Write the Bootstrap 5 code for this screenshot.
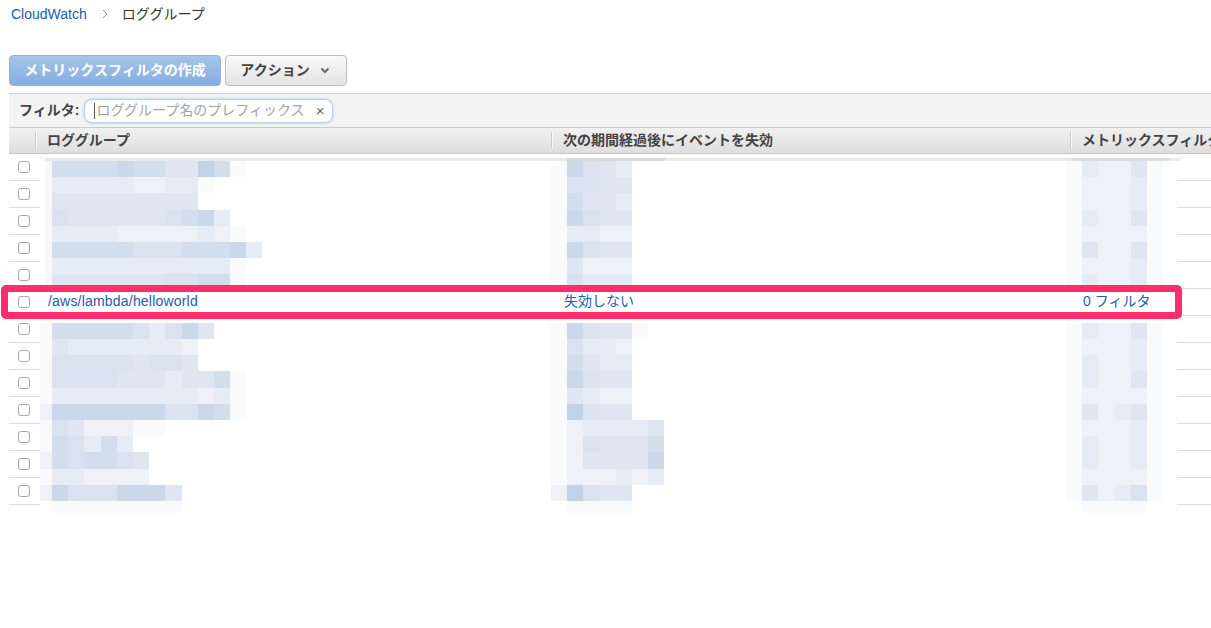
<!DOCTYPE html>
<html lang="ja">
<head>
<meta charset="utf-8">
<title>ロググループ</title>
<link href="https://cdn.jsdelivr.net/npm/bootstrap@5.3.0/dist/css/bootstrap.min.css" rel="stylesheet">
<style>
html,body{height:100%;overflow:hidden;background:#fff}
body{font-family:"Liberation Sans","Noto Sans CJK JP",sans-serif;font-size:14px;color:#444;position:relative}
a{color:#1a5cb0;text-decoration:none}
.crumbs{height:28px;padding-left:11px;color:#333}
.crumb-sep{margin:0 13px 0 14px;width:8px}
.page-main{padding-left:9px;margin-top:27px}
.act-bar{gap:4px;height:31px;margin-bottom:7px}
.btn.btn-make,.btn.btn-act{font-size:14px;font-weight:700;height:31px;border-radius:4px;padding:0;display:flex;align-items:center;justify-content:center}
.btn.btn-make,.btn.btn-make:disabled{width:212px;color:#fff;opacity:1;background:linear-gradient(#a6c5e9,#85ade0);border:1px solid #8fb2dd}
.btn.btn-act{width:122px;color:#444;gap:10px;padding-right:2px;background:linear-gradient(#f9f9f9,#e3e3e3);border:1px solid #bcbcbc}
.filter-bar{height:35px;background:#f3f3f3;border-top:1px solid #ccc;border-bottom:1px solid #ccc;padding-left:10px;gap:4px}
.filter-label{font-weight:700;font-size:14px;color:#444}
.filter-box{width:249px;height:24px;background:#fff;border:1px solid #b9d0ec;border-radius:8px;box-shadow:0 0 3px #a9c8ee;padding:0 8px 0 9px;font-size:14px;color:#a3a3a3;margin-left:1px}
.caret-bar{width:1px;height:16px;background:#555;margin-right:1px}
.filter-clear{font-size:15px;color:#666;line-height:1}
.log-wrap{width:1300px}
.table.log-table{table-layout:fixed;width:1300px;margin:0;font-size:14px;--bs-table-bg:transparent}
.log-table th{height:25px;padding:0 0 0 11px;font-size:14px;font-weight:700;color:#444;background:linear-gradient(#f1f1f1,#dedede);border-bottom:1px solid #c4c4c4;vertical-align:middle;position:relative}
.log-table th+th:before{content:"";position:absolute;left:-1px;top:4px;bottom:4px;width:2px;background:#fafafa;border-left:1px solid #ccc}
.log-table td{height:27px;padding:0 0 0 12px;border-bottom:1px solid #ddd;vertical-align:middle;color:#1a5cb0}
.log-table td:first-child{padding:0 0 0 9px}
.log-table .form-check-input{width:12px;height:12px;margin:0;display:block;border:1px solid #a8a8a8;border-radius:3px}
.path-link{letter-spacing:.2px}
.row-marked{position:relative;z-index:2;background:#fff}
.blur-cover{position:absolute;z-index:1;left:40px;top:158px;width:1137px;height:353px;background:#fefefe}
.blur-band{position:absolute;left:5px;right:-3px;top:0;height:3px;background:linear-gradient(90deg,#e9e9e9 0 522px,#d9d9d9 522px 620px,#ebebeb 620px 1026px,#dedede 1026px 1125px,#ebebeb 1125px)}
.blur-rows{position:absolute;left:0;right:0;top:3px}
.blur-row{display:grid;grid-template-columns:511px 515px 1fr;height:16.2px}
.blur-row:last-child{height:12px}
.blur-seg{display:flex}
.blur-seg i{display:block;width:16.2px;height:100%}
.blur-seg:first-child i:first-child{width:12px}
.blur-row:nth-child(-n+8) .blur-seg:first-child i:first-child{background:linear-gradient(90deg,#fefefe 5px,#f6f8fb 5px)}
.s0{background:#fefefe}.s1{background:#f8fafc}.s2{background:#eef2f8}.s3{background:#e6ecf5}.s4{background:#dfe6f1}.s5{background:#d9e2ee}.s6{background:#d2deec}.s7{background:#cbd8e9}.s8{background:#c2d2e6}
.mark-box{position:absolute;z-index:3;left:1px;top:285px;width:1181px;height:34px;border:7px solid #ff2d6c;border-radius:5px}
</style>
</head>
<body>
<nav class="crumbs d-flex align-items-center"><a href="#">CloudWatch</a><svg class="crumb-sep" width="8" height="10" viewBox="0 0 8 10"><path d="M2 1l4 4-4 4" fill="none" stroke="#999" stroke-width="1"/></svg><span>ロググループ</span></nav>
<main class="page-main">
  <div class="act-bar d-flex">
    <button class="btn btn-make" disabled>メトリックスフィルタの作成</button>
    <button class="btn btn-act">アクション<svg width="10" height="7" viewBox="0 0 10 7"><path d="M1.5 1.5L5 5l3.5-3.5" fill="none" stroke="#666" stroke-width="2"/></svg></button>
  </div>
  <div class="log-wrap">
    <div class="filter-bar d-flex align-items-center">
      <span class="filter-label">フィルタ:</span>
      <div class="filter-box d-flex align-items-center"><span class="caret-bar"></span><span class="flex-grow-1">ロググループ名のプレフィックス</span><span class="filter-clear">×</span></div>
    </div>
    <table class="table log-table">
      <colgroup><col style="width:27px"><col style="width:516px"><col style="width:519px"><col></colgroup>
      <thead><tr><th></th><th>ロググループ</th><th>次の期間経過後にイベントを失効</th><th>メトリックスフィルタ</th></tr></thead>
      <tbody id="logRows"></tbody>
    </table>
  </div>
</main>
<div class="blur-cover"><div class="blur-band"></div><div class="blur-rows" id="blurRows"></div></div>
<div class="mark-box"></div>
<script>
var box='<td><input class="form-check-input" type="checkbox"></td>';
var h='';
for(var i=0;i<13;i++){
  h+=(i==5?'<tr class="row-marked">'+box+'<td><a class="path-link" href="#">/aws/lambda/helloworld</a></td><td><a href="#">失効しない</a></td><td><a href="#">0 フィルタ</a></td>':'<tr>'+box+'<td></td><td></td><td></td>')+'</tr>';
}
document.getElementById('logRows').innerHTML=h;
var data=[
['1666676644861','17543','132241'],
['133333223310','15544','122231'],
['1444444444','16443','122231'],
['154444445673','17544','132241'],
['1333322222321','13322','122221'],
['16666655566673','17544','142241'],
['0333333333331','14222','122231'],
['0444444455661','15333','132231'],
['','',''],
['','',''],
['16666653574','175441','132241'],
['1433333332','15332','122231'],
['15555545540','16433','132231'],
['1555544434461','17544','132241'],
['1333333333231','14322','122221'],
['2777777755761','18544','142341'],
['1542221100','1233334','122231'],
['165363','1254446','132231'],
['2656654','1244447','132231'],
['1332222','1222323','122221'],
['275557774','28544','142351'],
['011111111','01111','011110']
];
var out='';
data.forEach(function(r){
  out+='<div class="blur-row">';
  r.forEach(function(s){
    out+='<div class="blur-seg">';
    for(var j=0;j<s.length;j++){out+='<i class="s'+s[j]+'"></i>';}
    out+='</div>';
  });
  out+='</div>';
});
document.getElementById('blurRows').innerHTML=out;
</script>
<script src="https://cdn.jsdelivr.net/npm/bootstrap@5.3.0/dist/js/bootstrap.bundle.min.js"></script>
</body>
</html>
